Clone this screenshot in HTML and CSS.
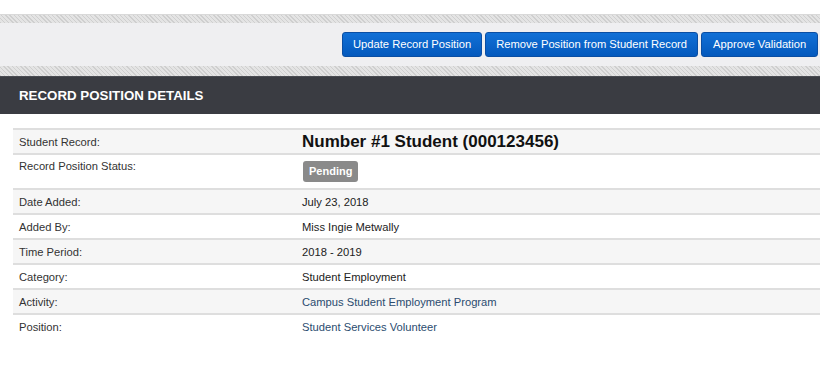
FILE: index.html
```html
<!DOCTYPE html>
<html>
<head>
<meta charset="utf-8">
<link rel="stylesheet" href="styles.css">
</head>
<body>
<div class="topline"></div>
<div class="hatch"></div>
<div class="toolbar">
  <button class="btn">Update Record Position</button>
  <button class="btn">Remove Position from Student Record</button>
  <button class="btn btn-wide">Approve Validation</button>
  <span class="btn-edge"></span>
</div>
<div class="hatch hatch-b"></div>
<div class="panel-head">RECORD POSITION DETAILS</div>
<div class="details">
  <div class="row alt">
    <div class="label">Student Record:</div>
    <div class="value name">Number #1 Student (000123456)</div>
  </div>
  <div class="row tall">
    <div class="label">Record Position Status:</div>
    <div class="value"><span class="badge">Pending</span></div>
  </div>
  <div class="row alt">
    <div class="label">Date Added:</div>
    <div class="value">July 23, 2018</div>
  </div>
  <div class="row">
    <div class="label">Added By:</div>
    <div class="value">Miss Ingie Metwally</div>
  </div>
  <div class="row alt">
    <div class="label">Time Period:</div>
    <div class="value">2018 - 2019</div>
  </div>
  <div class="row">
    <div class="label">Category:</div>
    <div class="value">Student Employment</div>
  </div>
  <div class="row alt">
    <div class="label">Activity:</div>
    <div class="value link">Campus Student Employment Program</div>
  </div>
  <div class="row last">
    <div class="label">Position:</div>
    <div class="value link">Student Services Volunteer</div>
  </div>
</div>
</body>
</html>
```

FILE: styles.css
```css
html, body {
  margin: 0;
  padding: 0;
  background: #ffffff;
  font-family: "Liberation Sans", Arial, sans-serif;
  color: #333;
  width: 820px;
  height: 370px;
  overflow: hidden;
}

.topline {
  height: 14px;
  background: #fff;
}

.hatch {
  height: 8px;
  background:
    repeating-linear-gradient(45deg, #cfcfcf 0 1px, #e4e4e4 1px 3px);
  border-top: 1px solid #d9d9d9;
}

.hatch-b {
  height: 10px;
  border-top: none;
}

.toolbar {
  height: 43px;
  background: #efeff1;
  display: flex;
  align-items: center;
  gap: 3px;
  padding-left: 342px;
  white-space: nowrap;
  overflow: hidden;
  box-sizing: border-box;
}

.btn {
  flex: none;
  height: 25px;
  padding: 0 10px;
  border: 1px solid #0a4ea3;
  border-radius: 3px;
  background: linear-gradient(#1170d6, #0459bd);
  color: #fff;
  font-family: "Liberation Sans", Arial, sans-serif;
  font-size: 11.2px;
  line-height: 23px;
  margin-top: -1px;
}

.btn-wide {
  padding: 0 11px;
}

.btn-edge {
  flex: none;
  width: 20px;
  height: 25px;
  box-sizing: border-box;
  margin-top: -1px;
  border: 1px solid #0a4ea3;
  border-radius: 3px;
  background: linear-gradient(#1170d6, #0459bd);
}

.panel-head {
  height: 37px;
  background: #3a3c42;
  border-top: 1px solid #4a4c52;
  color: #fff;
  font-weight: bold;
  font-size: 13.3px;
  line-height: 37px;
  padding-left: 19px;
}

.details {
  padding: 14px 0 0 13px;
}

.row {
  display: flex;
  height: 23px;
  border-top: 2px solid #dedede;
  background: #fff;
  font-size: 11.2px;
  align-items: center;
}

.row.alt {
  background: #f6f6f6;
}

.row.tall {
  height: 33px;
  align-items: flex-start;
}

.row.last {
  height: 24px;
}

.label {
  width: 283px;
  padding-left: 6px;
  flex: none;
}

.tall .label {
  padding-top: 5px;
}

.value {
  color: #222;
}

.value.name {
  font-size: 17px;
  font-weight: bold;
  color: #111;
}

.value.link {
  color: #2b4c6f;
}

.badge {
  display: inline-block;
  margin-top: 6px;
  margin-left: 1px;
  background: #8a8a8a;
  color: #fff;
  font-weight: bold;
  font-size: 11px;
  line-height: 21px;
  padding: 0 6px;
  border-radius: 3px;
}
```
